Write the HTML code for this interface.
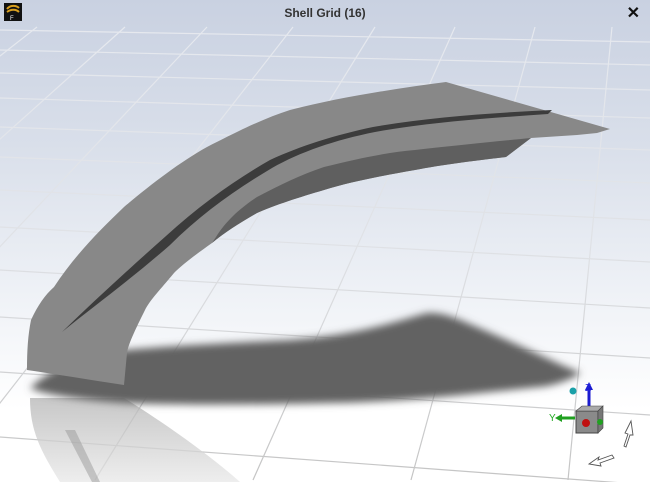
<!DOCTYPE html>
<html><head><meta charset="utf-8"><style>
html,body{margin:0;padding:0;width:650px;height:482px;overflow:hidden}
body{background:linear-gradient(#c9d1e1 0%,#d9dfea 30%,#eef1f6 60%,#ffffff 85%);font-family:"Liberation Sans",sans-serif;position:relative}
.title{position:absolute;top:6px;left:0;width:650px;text-align:center;font-size:12px;font-weight:bold;color:#333}
.x{position:absolute;top:3px;right:10px;font-size:16px;font-weight:bold;color:#111}
.logo{position:absolute;left:4px;top:3px;width:18px;height:18px;background:#111}
</style></head><body>
<svg width="650" height="482" style="position:absolute;left:0;top:0">
<defs>
<filter id="b"><feGaussianBlur stdDeviation="4"/></filter>
<linearGradient id="gs" gradientUnits="userSpaceOnUse" x1="0" y1="20" x2="0" y2="482"><stop offset="0" stop-color="#e6e9ef"/><stop offset="0.5" stop-color="#dfe1e5"/><stop offset="1" stop-color="#c4c4c4"/></linearGradient>
<linearGradient id="refl" x1="0" y1="0" x2="0" y2="1"><stop offset="0" stop-color="#b5b5b5"/><stop offset="1" stop-color="#e8e8e8"/></linearGradient>
</defs>
<g stroke="url(#gs)" stroke-width="1.2" fill="none">
<path d="M0 30 L650 42"/><path d="M0 50 L650 65"/><path d="M0 73 L650 90"/><path d="M0 98 L650 118"/>
<path d="M0 127 L650 150"/><path d="M0 157 L650 183"/><path d="M0 190 L650 220"/><path d="M0 227 L650 262"/>
<path d="M0 270 L650 308"/><path d="M0 317 L650 358"/><path d="M0 372 L650 415"/><path d="M0 437 L650 485"/>
<path d="M690 27 L725 480"/>
<path d="M612 27 L568 480"/>
<path d="M535 27 L411 480"/>
<path d="M455 27 L253 480"/>
<path d="M375 27 L95 480"/>
<path d="M293 27 L-60 480"/>
<path d="M207 27 L-220 480"/>
<path d="M125 27 L-380 480"/>
<path d="M37 27 L-540 480"/>
</g>
<path d="M30 398 L124 398 C160 420 210 455 240 482 L60 482 C40 450 30 430 30 398 Z" fill="url(#refl)" opacity="0.75"/>
<path d="M65 430 L75 430 L100 482 L92 482 Z" fill="#999" opacity="0.5"/>
<path d="M30 388 C60 360 110 350 124 350 C180 345 250 342 290 340 C360 335 400 320 427 313 C445 312 460 320 477 327 C520 345 560 365 581 373 C565 383 545 387 539 387 C460 395 400 402 332 403 C250 405 170 405 124 403 C80 400 45 395 30 388 Z" fill="#626262" filter="url(#b)"/>
<path d="M446 82 L610 129 L597 133 L577 135 L531 138 L506 157 C480 160 440 165 415 170 C380 176 350 182 324 190 C300 197 275 205 257 213 C240 223 225 232 212 243 C195 255 182 265 174 273 C160 290 150 300 145 310 C135 330 128 345 127 353 L124 385 C90 380 55 374 27 370 C27 350 28 335 31 320 C38 305 45 295 54 287 C75 255 100 230 124 207 C150 185 180 162 207 147 C240 130 265 118 290 110 C340 97 400 88 446 82 Z" fill="#888888"/>
<path d="M531 138 L506 157 C480 160 440 165 415 170 C380 176 350 182 324 190 C300 197 275 205 257 213 C240 223 225 232 212 243 L216 237 C225 222 240 208 257 197 C280 185 300 175 324 167 C360 158 390 152 415 150 C460 145 500 141 531 138 Z" fill="#5f5f5f"/>
<path d="M62 332 C95 300 130 268 166 236 C200 205 235 180 270 160 C300 146 335 135 373 127 C430 117 490 113 552 110 L548 114 C490 118 430 122 375 132 C335 140 300 152 272 168 C235 190 200 215 170 245 C130 280 95 305 62 332 Z" fill="#3c3c3c"/>
<circle cx="573" cy="391" r="3.5" fill="#1aa0a8"/>
<path d="M589 384 L589 408" stroke="#1b1bd0" stroke-width="3"/><polygon points="585,390 593,390 589,382" fill="#1b1bd0"/>
<text x="585" y="391" font-size="10" fill="#2222dd" font-family="Liberation Sans">Z</text>
<path d="M575 418 L560 418" stroke="#20a020" stroke-width="3"/><polygon points="562,414 562,422 555,418" fill="#20a020"/>
<text x="549" y="421" font-size="10" fill="#22aa22" font-family="Liberation Sans">Y</text>
<rect x="576" y="411" width="22" height="22" fill="#8a8a8a" stroke="#444"/>
<polygon points="576,411 582,406 603,406 598,411" fill="#aaa" stroke="#444" stroke-width="0.6"/>
<polygon points="598,411 603,406 603,428 598,433" fill="#777" stroke="#444" stroke-width="0.6"/>
<circle cx="586" cy="423" r="4" fill="#c01010"/><circle cx="600" cy="422" r="3" fill="#20a020"/>
<path d="M624 446 L628 434 L625 433 L631 421 L633 435 L630 435 L626 447 Z" stroke="#555" fill="#fff" stroke-width="0.9"/>
<path d="M612 455 L598 460 L599 457 L589 464 L601 466 L600 463 L614 458 Z" stroke="#555" fill="#fff" stroke-width="0.9"/>
</svg>
<div class="logo"><svg width="18" height="18"><path d="M3 6 C6 2 12 2 15 5 M3 9 C7 6 12 6 15 9" stroke="#d9a020" stroke-width="2" fill="none"/><text x="6" y="17" font-size="6" fill="#fff">F</text></svg></div>
<div class="title">Shell Grid (16)</div>
<div class="x">✕</div>
</body></html>
